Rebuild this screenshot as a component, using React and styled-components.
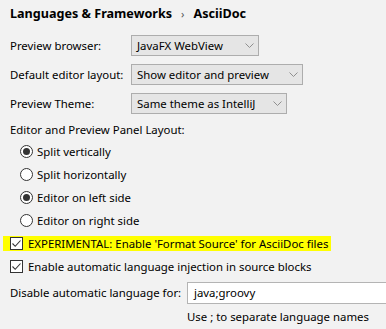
import React from "react";
import styled, {createGlobalStyle} from "styled-components";

const Global = createGlobalStyle`
   html, body {
      margin: 0;
      padding: 0;
      background: #f2f2f2;
   }
   body {
      font-family: "Noto Sans", "Open Sans", sans-serif;
      font-size: 11.4px;
      color: #000;
   }
`;

const Page = styled.div`
   width: 386px;
   height: 329px;
   overflow: hidden;
   display: flex;
   flex-flow: column nowrap;
   padding: 6px 0 0 10px;
   box-sizing: border-box;
   line-height: 16px;
   white-space: nowrap;
`;

const Breadcrumb = styled.div`
   display: flex;
   align-items: center;
   gap: 9px;
   font-weight: bold;
   font-size: 12.6px;
   margin-bottom: 13px;
   span.sep {
      font-weight: normal;
      color: #555;
      font-size: 11px;
   }
`;

const FormGrid = styled.div`
   display: grid;
   grid-template-columns: 121px auto;
   row-gap: 8px;
   align-items: center;
   justify-items: start;
`;

const Combo = styled.div`
   box-sizing: border-box;
   width: ${p => p.width}px;
   height: 21px;
   display: flex;
   align-items: center;
   justify-content: space-between;
   padding: 0 4px 0 5px;
   background: #e5e5e5;
   border: 1px solid #adadad;
`;

const Chevron = () => (
   <svg width="9" height="5" viewBox="0 0 9 5">
      <path d="M0.5 0.5 L4.5 4.5 L8.5 0.5" fill="none" stroke="#8f8f8f" strokeWidth="1" />
   </svg>
);

const SectionTitle = styled.div`
   margin-top: 8px;
   margin-bottom: 2px;
`;

const RadioGroup = styled.div`
   display: flex;
   flex-flow: column nowrap;
   padding-left: 10px;
`;

const OptionRow = styled.div`
   height: 23px;
   display: flex;
   align-items: center;
   gap: 4px;
`;

const RadioCircle = styled.span`
   box-sizing: border-box;
   width: 13px;
   height: 13px;
   border-radius: 50%;
   border: 1px solid #333;
   background: #fff;
   display: flex;
   align-items: center;
   justify-content: center;
   &::after {
      content: "";
      width: 7px;
      height: 7px;
      border-radius: 50%;
      background: ${p => (p.checked ? "#333" : "transparent")};
   }
`;

const CheckRow = styled.div`
   height: 23px;
   display: flex;
   align-items: center;
   margin-left: ${p => (p.highlight ? "-7px" : "0")};
`;

const Highlight = styled.span`
   display: flex;
   align-items: center;
   gap: 5px;
   height: 15px;
   padding: 0 3px 0 ${p => (p.on ? "7px" : "0")};
   background: ${p => (p.on ? "#ffff00" : "transparent")};
`;

const Box = styled.span`
   box-sizing: border-box;
   width: 13px;
   height: 13px;
   border: 1px solid #333;
   background: #fff;
   display: flex;
   align-items: center;
   justify-content: center;
`;

const Check = () => (
   <svg width="11" height="11" viewBox="0 0 11 11">
      <path d="M1.5 5.5 L4.2 8.3 L9.5 2.5" fill="none" stroke="#333" strokeWidth="1.1" />
   </svg>
);

const FieldRow = styled.div`
   margin-top: 4px;
   display: flex;
   align-items: center;
`;

const FieldLabel = styled.div`
   width: 177px;
`;

const TextField = styled.div`
   box-sizing: border-box;
   flex: 1;
   height: 22px;
   margin-right: -2px;
   padding-left: 6px;
   display: flex;
   align-items: center;
   background: #fff;
   border: 1px solid #b4b4b4;
`;

const Hint = styled.div`
   margin-top: 5px;
   padding-left: 177px;
`;

function Checkbox({label, highlight}) {
   return (
      <CheckRow highlight={highlight}>
         <Highlight on={highlight}>
            <Box>
               <Check />
            </Box>
            {label}
         </Highlight>
      </CheckRow>
   );
}

export default function App() {
   const combos = [
      {label: "Preview browser:", value: "JavaFX WebView", width: 128},
      {label: "Default editor layout:", value: "Show editor and preview", width: 172},
      {label: "Preview Theme:", value: "Same theme as IntelliJ", width: 156},
   ];
   const radios = [
      {label: "Split vertically", checked: true},
      {label: "Split horizontally", checked: false},
      {label: "Editor on left side", checked: true},
      {label: "Editor on right side", checked: false},
   ];
   return (
      <Page>
         <Global />
         <Breadcrumb>
            <span>Languages &amp; Frameworks</span>
            <span className="sep">›</span>
            <span>AsciiDoc</span>
         </Breadcrumb>
         <FormGrid>
            {combos.map(c => (
               <React.Fragment key={c.label}>
                  <div>{c.label}</div>
                  <Combo width={c.width}>
                     <span>{c.value}</span>
                     <Chevron />
                  </Combo>
               </React.Fragment>
            ))}
         </FormGrid>
         <SectionTitle>Editor and Preview Panel Layout:</SectionTitle>
         <RadioGroup>
            {radios.map(r => (
               <OptionRow key={r.label}>
                  <RadioCircle checked={r.checked} />
                  {r.label}
               </OptionRow>
            ))}
         </RadioGroup>
         <Checkbox highlight label="EXPERIMENTAL: Enable 'Format Source' for AsciiDoc files" />
         <Checkbox label="Enable automatic language injection in source blocks" />
         <FieldRow>
            <FieldLabel>Disable automatic language for:</FieldLabel>
            <TextField>java;groovy</TextField>
         </FieldRow>
         <Hint>Use ; to separate language names</Hint>
      </Page>
   );
}
